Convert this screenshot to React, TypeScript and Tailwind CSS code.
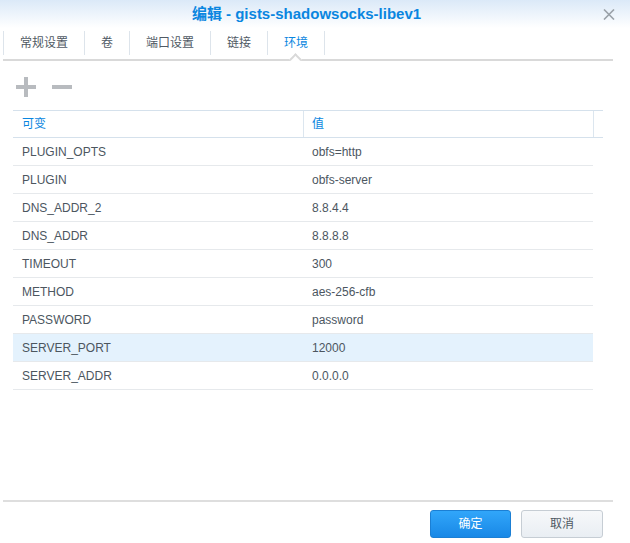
import React from "react";

const font = { fontFamily: '"Liberation Sans", "Noto Sans CJK SC", sans-serif' };

const tabs = ["常规设置", "卷", "端口设置", "链接", "环境"];

const rows: { name: string; value: string; selected?: boolean }[] = [
	{ name: "PLUGIN_OPTS", value: "obfs=http" },
	{ name: "PLUGIN", value: "obfs-server" },
	{ name: "DNS_ADDR_2", value: "8.8.4.4" },
	{ name: "DNS_ADDR", value: "8.8.8.8" },
	{ name: "TIMEOUT", value: "300" },
	{ name: "METHOD", value: "aes-256-cfb" },
	{ name: "PASSWORD", value: "password" },
	{ name: "SERVER_PORT", value: "12000", selected: true },
	{ name: "SERVER_ADDR", value: "0.0.0.0" },
];

export default function App() {
	return (
		<div className="flex h-[543px] w-[630px] flex-col bg-white" style={font}>
			{/* title bar */}
			<div className="grid h-[28px] shrink-0 grid-cols-[1fr_auto_1fr] items-center bg-gradient-to-b from-[#dbe9f8] to-white pr-[17px]">
				<div />
				<h1 className="pt-[1px] text-[15px] font-bold text-[#0a86e0]">编辑 - gists-shadowsocks-libev1</h1>
				<div className="-mr-[17px] flex justify-end pr-[15px]">
					<svg width="12" height="11" viewBox="0 0 12 11">
						<path d="M1 0.5 L11 10.5 M11 0.5 L1 10.5" stroke="#9aa1a8" strokeWidth="1.6" />
					</svg>
				</div>
			</div>

			<div className="flex flex-1 flex-col pl-[3px] pr-[17px]">
				{/* tabs */}
				<div className="flex h-[33px] shrink-0 items-stretch border-b-2 border-[#d9d9d9] pt-[3px] pb-[4px]">
					{tabs.map((t) => {
						const active = t === "环境";
						return (
							<div key={t} className="relative flex items-center border-l border-[#dde4eb] px-4 last:border-r">
								<span className={`text-[12px] ${active ? "text-[#0a86e0]" : "text-[#505a64]"}`}>{t}</span>
								{active && <span className="absolute bottom-[-9px] left-1/2 -ml-[5px] h-[9px] w-[9px] rotate-45 border-l-2 border-t-2 border-[#d9d9d9] bg-white" />}
							</div>
						);
					})}
				</div>

				{/* toolbar */}
				<div className="flex h-[49px] shrink-0 items-center gap-[16px] pl-[13px] pt-[3px]">
					<svg width="20" height="20" viewBox="0 0 20 20">
						<path d="M8 0h4v8h8v4h-8v8h-4v-8h-8v-4h8z" fill="#b8bbbf" />
					</svg>
					<svg width="20" height="20" viewBox="0 0 20 20">
						<path d="M0 8h20v4h-20z" fill="#b8bbbf" />
					</svg>
				</div>

				{/* table */}
				<div className="ml-[10px] flex-1">
					<div className="flex h-[28px] w-[590px] border-y border-[#d5e1ec] text-[12px] text-[#0a86e0]">
						<div className="flex w-[290px] items-center pl-[9px]">可变</div>
						<div className="flex w-[290px] items-center border-l border-[#dce6ef] pl-[8px]">值</div>
						<div className="w-[10px] border-l border-[#dce6ef]" />
					</div>
					{rows.map((r) => (
						<div key={r.name} className={`flex h-[28px] w-[580px] border-b border-[#e6e9ec] text-[12px] text-[#4c565f] ${r.selected ? "bg-[#e4f2fd]" : ""}`}>
							<div className="flex w-[290px] items-center pl-[9px]">{r.name}</div>
							<div className="flex w-[290px] items-center pl-[9px]">{r.value}</div>
						</div>
					))}
				</div>

				{/* footer */}
				<div className="flex h-[43px] shrink-0 items-start justify-end gap-[10px] border-t-2 border-[#dedede] pt-[8px] pr-[10px]">
					<button className="h-[28px] w-[81px] rounded-[3px] border border-[#1b7fd4] bg-gradient-to-b from-[#31a6fa] to-[#1888e6] text-[12px] text-white">确定</button>
					<button className="h-[28px] w-[82px] rounded-[3px] border border-[#c6cdd4] bg-gradient-to-b from-[#f6f8fa] to-[#e9eef3] text-[12px] text-[#4e5862]">取消</button>
				</div>
			</div>
		</div>
	);
}
